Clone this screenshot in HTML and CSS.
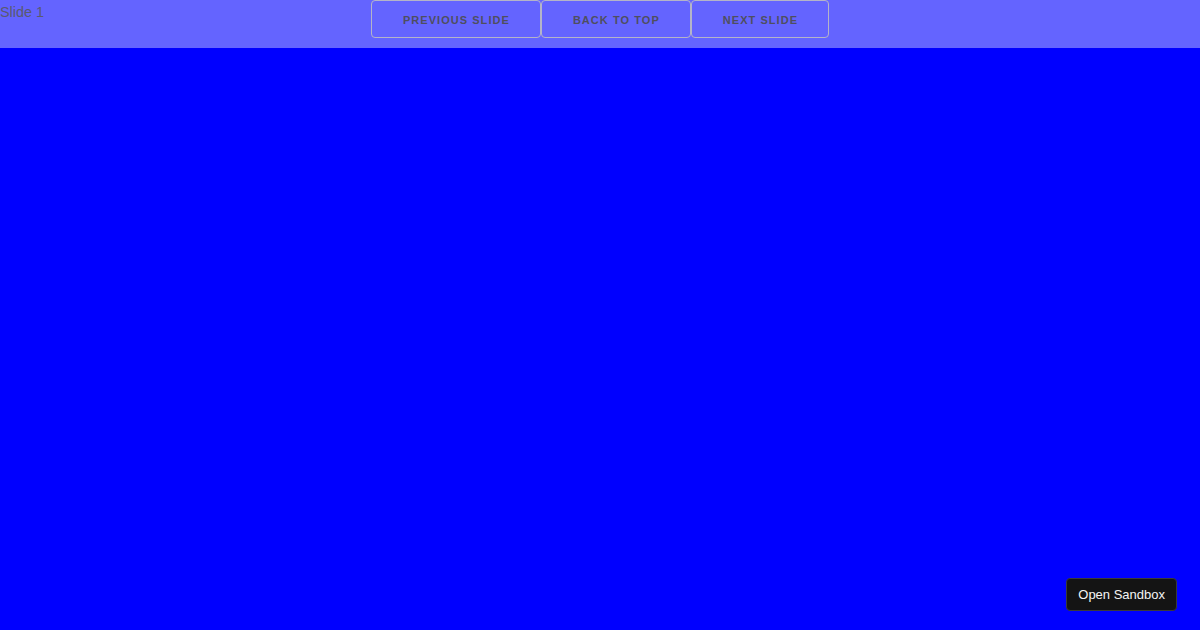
FILE: index.html
```html
<!DOCTYPE html>
<html>
<head>
<meta charset="utf-8">
<link rel="stylesheet" href="styles.css">
</head>
<body>
<div class="page">
  <header class="bar">
    <div class="label">Slide 1</div>
    <nav class="nav">
      <button class="btn">PREVIOUS SLIDE</button>
      <button class="btn">BACK TO TOP</button>
      <button class="btn">NEXT SLIDE</button>
    </nav>
    <div></div>
  </header>
  <main class="slide"></main>
</div>
<button class="sandbox">Open Sandbox</button>
</body>
</html>
```

FILE: styles.css
```css
html, body {
  margin: 0;
  padding: 0;
  height: 100%;
}
body {
  background: #0000ff;
  font-family: "Liberation Sans", Arial, sans-serif;
  overflow: hidden;
}
.page {
  display: flex;
  flex-direction: column;
  height: 100%;
}
.bar {
  height: 48px;
  background: #6464ff;
  display: grid;
  grid-template-columns: 1fr auto 1fr;
  align-items: start;
}
.label {
  font-size: 14.4px;
  line-height: 24px;
  color: #5a5a6e;
}
.nav {
  display: flex;
}
.btn {
  height: 38px;
  padding: 2px 30px 0 31px;
  background: transparent;
  border: 1px solid #b4b4c8;
  border-radius: 4px;
  font-family: "Liberation Sans", Arial, sans-serif;
  font-weight: bold;
  font-size: 11px;
  letter-spacing: 1.05px;
  color: #4f4f5e;
  cursor: pointer;
}
.slide {
  flex: 1;
}
.sandbox {
  position: fixed;
  right: 23px;
  bottom: 19px;
  height: 33px;
  padding: 0 11px;
  background: #141414;
  border: 1px solid #3a3a3a;
  border-radius: 4px;
  color: #f4f4f4;
  font-family: "Liberation Sans", Arial, sans-serif;
  font-size: 13px;
}
```
